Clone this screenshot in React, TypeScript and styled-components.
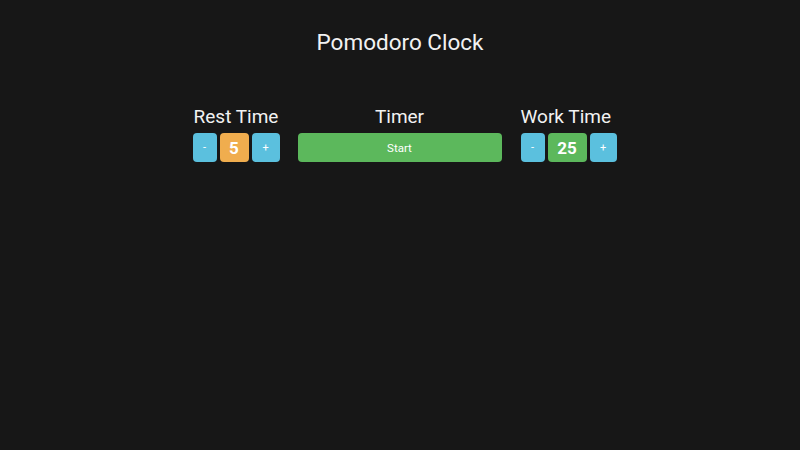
import React, { useState } from 'react';
import styled, { createGlobalStyle } from 'styled-components';

const GlobalStyle = createGlobalStyle`
    html, body {
        margin: 0;
        padding: 0;
        background: #171717;
        font-family: Roboto, "Liberation Sans", sans-serif;
        color: #f2f2f2;
    }
`;

const Page = styled.div`
    width: 800px;
    height: 450px;
    display: flex;
    flex-direction: column;
    align-items: center;
`;

const Title = styled.h1`
    margin: 27px 0 0;
    font-size: 22.5px;
    font-weight: 400;
    line-height: 30px;
`;

const Controls = styled.div`
    margin-top: 48px;
    width: 100%;
    display: grid;
    grid-template-columns: 1fr 18px 204px 19px 1fr;
`;

const Column = styled.div<{ col: number; align: 'start' | 'center' | 'end'; items: string }>`
    grid-column: ${({ col }) => col};
    justify-self: ${({ align }) => align};
    display: flex;
    flex-direction: column;
    align-items: ${({ items }) => items};
`;

const Heading = styled.h2`
    margin: 0 0 4px;
    font-size: 19px;
    font-weight: 400;
    line-height: 24px;
`;

const Row = styled.div`
    display: flex;
    gap: 3px;
`;

const Btn = styled.button<{ w: number; tone: string }>`
    width: ${({ w }) => w}px;
    height: 29px;
    border: none;
    border-radius: 4px;
    background: ${({ tone }) => tone};
    color: #fff;
    font-family: inherit;
    font-size: 11px;
    padding: 0;
    cursor: pointer;
`;

const Value = styled.div<{ w: number; tone: string }>`
    width: ${({ w }) => w}px;
    height: 29px;
    border-radius: 4px;
    background: ${({ tone }) => tone};
    color: #fff;
    font-size: 17px;
    font-weight: 700;
    display: flex;
    align-items: center;
    justify-content: center;
`;

const StartButton = styled.button`
    width: 204px;
    height: 29px;
    border: none;
    border-radius: 4px;
    background: #5cb85c;
    color: #fff;
    font-family: inherit;
    font-size: 11.5px;
    cursor: pointer;
`;

const BLUE = '#5bc0de';

const App = () => {
    const [rest, setRest] = useState(5);
    const [work, setWork] = useState(25);

    return (
        <Page>
            <GlobalStyle />
            <Title>Pomodoro Clock</Title>
            <Controls>
                <Column col={1} align="end" items="center">
                    <Heading>Rest Time</Heading>
                    <Row>
                        <Btn w={24} tone={BLUE} onClick={() => setRest(Math.max(1, rest - 1))}>-</Btn>
                        <Value w={29} tone="#f0ad4e">{rest}</Value>
                        <Btn w={28} tone={BLUE} onClick={() => setRest(rest + 1)}>+</Btn>
                    </Row>
                </Column>
                <Column col={3} align="center" items="center">
                    <Heading>Timer</Heading>
                    <StartButton>Start</StartButton>
                </Column>
                <Column col={5} align="start" items="flex-start">
                    <Heading>Work Time</Heading>
                    <Row>
                        <Btn w={24} tone={BLUE} onClick={() => setWork(Math.max(1, work - 1))}>-</Btn>
                        <Value w={39} tone="#5cb85c">{work}</Value>
                        <Btn w={27} tone={BLUE} onClick={() => setWork(work + 1)}>+</Btn>
                    </Row>
                </Column>
            </Controls>
        </Page>
    );
};

export default App;
